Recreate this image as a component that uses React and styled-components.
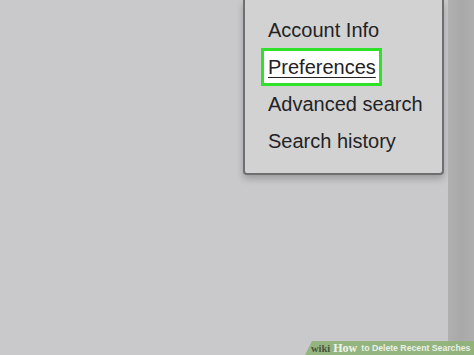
import React from "react";
import styled, { createGlobalStyle } from "styled-components";

const Global = createGlobalStyle`
  html, body { margin: 0; padding: 0; }
  body { width: 474px; height: 355px; overflow: hidden; background: #c9c9cb; }
  #root { width: 474px; height: 355px; }
`;

const Screen = styled.div`
  position: relative;
  display: flex;
  width: 474px;
  height: 355px;
  background: #c9c9cb;
  overflow: hidden;
`;

const Main = styled.div`
  flex: 1;
  display: flex;
  justify-content: flex-end;
  align-items: flex-start;
  padding-right: 4px;
`;

const Scrollbar = styled.div`
  width: 26px;
  background: linear-gradient(90deg, #b0b0b0 0%, #a9a9a9 50%, #aeaeae 100%);
`;

const Menu = styled.div`
  display: flex;
  flex-direction: column;
  align-items: flex-start;
  padding: 12px 0 13px 23px;
  box-sizing: border-box;
  width: 201px;
  background: #d2d2d2;
  border: 2px solid #6f6f6f;
  border-top: none;
  border-radius: 0 0 4px 4px;
  box-shadow: 0 4px 7px rgba(0, 0, 0, 0.22);
`;

const Item = styled.div`
  height: 37px;
  line-height: 37px;
  font-family: "Liberation Sans", Arial, sans-serif;
  font-size: 20px;
  color: #232326;
  white-space: nowrap;
`;

const Label = styled.span`
  ${(p) =>
    p.$active &&
    `
    background: #ffffff;
    text-decoration: underline;
    text-underline-offset: 3px;
    text-decoration-thickness: 1px;
    padding: 5px 3px 5px 4px;
    margin-left: -4px;
    outline: 3px solid #2ee22a;
  `}
`;

const Watermark = styled.div`
  position: absolute;
  right: 0;
  bottom: 0;
  height: 14px;
  width: 169px;
  background: #90b47a;
  clip-path: polygon(7px 0, 100% 0, 100% 100%, 0 100%);
  display: flex;
  align-items: center;
  padding-left: 6px;
  box-sizing: border-box;
  white-space: nowrap;
  opacity: 0.92;
`;

const Wiki = styled.span`
  font-family: "Liberation Serif", serif;
  font-weight: bold;
  font-size: 10.5px;
  color: #3b4a31;
  margin-right: 3px;
`;

const How = styled.span`
  font-family: "Liberation Serif", serif;
  font-weight: bold;
  font-size: 12px;
  color: #f4f7ef;
  margin-right: 4px;
`;

const Title = styled.span`
  font-family: "Liberation Sans", Arial, sans-serif;
  font-weight: bold;
  font-size: 8.7px;
  color: #eef3ea;
`;

const items = ["Account Info", "Preferences", "Advanced search", "Search history"];

export default function App() {
  return (
    <>
      <Global />
      <Screen>
        <Main>
          <Menu>
            {items.map((t) => (
              <Item key={t}>
                <Label $active={t === "Preferences"}>{t}</Label>
              </Item>
            ))}
          </Menu>
        </Main>
        <Scrollbar />
        <Watermark>
          <Wiki>wiki</Wiki>
          <How>How</How>
          <Title>to Delete Recent Searches</Title>
        </Watermark>
      </Screen>
    </>
  );
}
